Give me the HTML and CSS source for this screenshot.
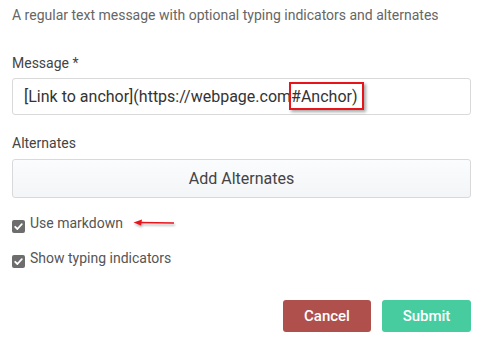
FILE: index.html
```html
<!DOCTYPE html>
<html>
<head>
<meta charset="utf-8">
<link rel="stylesheet" href="styles.css">
</head>
<body>
<div class="form">
  <p class="desc">A regular text message with optional typing indicators and alternates</p>
  <div class="field">
    <label class="label">Message *</label>
    <div class="input">[Link to anchor](https://webpage.com<span class="mark">#Anchor)</span></div>
  </div>
  <div class="field alt">
    <label class="label">Alternates</label>
    <button class="add">Add Alternates</button>
  </div>
  <div class="check first">
    <span class="box"><svg viewBox="0 0 13 13" width="13" height="13"><path d="M3.2 6.8 L5.4 9 L9.8 4.2" fill="none" stroke="#fff" stroke-width="1.8" stroke-linecap="round" stroke-linejoin="round"/></svg></span>
    <span class="ctext">Use markdown</span>
    <svg class="arrow" viewBox="0 0 43 10" width="43" height="10"><path d="M5 4.5 L41 5" stroke="#e8141b" stroke-width="1.6" fill="none"/><path d="M0.5 4.4 L9 1.4 L8 7.4 Z" fill="#e8141b"/></svg>
  </div>
  <div class="check second">
    <span class="box"><svg viewBox="0 0 13 13" width="13" height="13"><path d="M3.2 6.8 L5.4 9 L9.8 4.2" fill="none" stroke="#fff" stroke-width="1.8" stroke-linecap="round" stroke-linejoin="round"/></svg></span>
    <span class="ctext">Show typing indicators</span>
  </div>
  <div class="actions">
    <button class="btn cancel">Cancel</button>
    <button class="btn submit">Submit</button>
  </div>
</div>
</body>
</html>
```
FILE: styles.css
```css
html, body {
  margin: 0;
  padding: 0;
  background: #fff;
}
body {
  font-family: Roboto, "Liberation Sans", sans-serif;
  color: #444;
}
.form {
  padding: 0 10px 0 12px;
  display: flex;
  flex-direction: column;
}
.desc {
  margin: 7px 0 0 0;
  font-size: 14px;
  line-height: 16px;
  color: #666;
}
.field {
  display: flex;
  flex-direction: column;
  margin-top: 32px;
}
.field.alt {
  margin-top: 20px;
}
.label {
  font-size: 14px;
  line-height: 16px;
  color: #444;
  margin-bottom: 7px;
}
.field.alt .label {
  margin-bottom: 8px;
}
.input {
  box-sizing: border-box;
  height: 37px;
  border: 1px solid #d9d9d9;
  border-radius: 3px;
  padding: 0 11px;
  font-size: 16px;
  line-height: 35px;
  color: #333;
  white-space: nowrap;
}
.mark {
  border: 2px solid #e8141b;
  margin-left: -2px;
  padding: 3px 4px 2px 0;
  box-shadow: 2px 2px 3px rgba(0,0,0,0.35);
}
.add {
  box-sizing: border-box;
  height: 39px;
  border: 1px solid #d9d9d9;
  border-radius: 3px;
  background: linear-gradient(#fbfcfd, #f3f5f7);
  font-family: inherit;
  font-size: 16px;
  color: #444;
  padding: 0;
}
.check {
  display: flex;
  align-items: flex-start;
  font-size: 14px;
  line-height: 16px;
  color: #555;
}
.check.first {
  margin-top: 17px;
}
.check.second {
  margin-top: 17px;
}
.box {
  width: 13px;
  height: 13px;
  border-radius: 2px;
  background: #6d6d6d;
  display: inline-flex;
  margin-right: 5px;
  margin-top: 5px;
}
.box svg { display: block; }
.arrow {
  margin-left: 10px;
  margin-top: 3px;
  filter: drop-shadow(1px 2px 1px rgba(0,0,0,0.3));
}
.actions {
  display: flex;
  justify-content: flex-end;
  gap: 11px;
  margin-top: 32px;
}
.btn {
  height: 32px;
  border: 0;
  border-radius: 3px;
  color: #fff;
  font-family: inherit;
  font-size: 15px;
  font-weight: 500;
  padding: 0;
}
.cancel {
  width: 88px;
  background: #b0504d;
}
.submit {
  width: 89px;
  background: #47cc9f;
}
```
